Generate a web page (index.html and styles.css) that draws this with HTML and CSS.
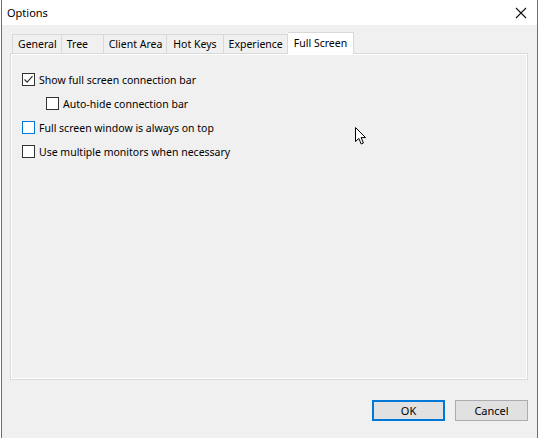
FILE: index.html
```html
<!DOCTYPE html>
<html lang="en">
<head>
    <meta charset="UTF-8">
    <title>Options</title>
    <link rel="stylesheet" href="styles.css">
</head>
<body>
    <div class="window">
        <div class="title-bar">
            <span class="title">Options</span>
            <svg class="close" width="12" height="12" viewBox="0 0 12 12">
                <path d="M1 1 L11 11 M11 1 L1 11" stroke="#111" stroke-width="1.1" fill="none"/>
            </svg>
        </div>
        <div class="client">
            <div class="tabs">
                <div class="tab">General</div>
                <div class="tab">Tree</div>
                <div class="tab">Client Area</div>
                <div class="tab wide">Hot Keys</div>
                <div class="tab">Experience</div>
                <div class="tab active">Full Screen</div>
            </div>
            <div class="pane">
                <label class="option">
                    <span class="box checked">
                        <svg width="11" height="11" viewBox="0 0 11 11"><path d="M1.5 5.5 L4.2 8.2 L9.5 2.2" stroke="#333" stroke-width="1.2" fill="none"/></svg>
                    </span>
                    Show full screen connection bar
                </label>
                <label class="option indent">
                    <span class="box"></span>
                    Auto-hide connection bar
                </label>
                <label class="option">
                    <span class="box focus"></span>
                    Full screen window is always on top
                </label>
                <label class="option">
                    <span class="box"></span>
                    Use multiple monitors when necessary
                </label>
            </div>
            <div class="buttons">
                <button class="btn default">OK</button>
                <button class="btn">Cancel</button>
            </div>
        </div>
        <!-- mouse pointer resting over the pane -->
        <svg class="pointer" width="14" height="20" viewBox="0 0 14 20">
            <path d="M0.5 0.5 L0.5 14.5 L3.8 11.4 L6.2 17 L8.4 16 L6.1 10.6 L10.6 10.6 Z" fill="#fff" stroke="#000" stroke-width="1"/>
        </svg>
    </div>
</body>
</html>
```

FILE: styles.css
```css
* {
    box-sizing: border-box;
}
body, html {
    margin: 0;
    height: 100%;
    background-color: #ffffff;
    font-family: "Noto Sans", "Open Sans", sans-serif;
    font-size: 10.5px;
    color: #000;
}
.window {
    position: relative;
    margin-left: 1px;
    width: 537px;
    height: 438px;
    border-left: 1px solid #6e6e6e;
    border-right: 1px solid #6e6e6e;
    display: flex;
    flex-direction: column;
    background-color: #f0f0f0;
}
.title-bar {
    height: 25px;
    background-color: #fff;
    display: flex;
    align-items: center;
    justify-content: space-between;
    padding: 0 10px 0 5px;
    flex-shrink: 0;
}
.title {
    font-size: 11px;
    margin-top: -1px;
}
.client {
    flex: 1;
    display: flex;
    flex-direction: column;
    padding: 7px 9px 0 8px;
}
.tabs {
    display: flex;
    align-items: flex-end;
    height: 21px;
    padding-left: 2px;
    position: relative;
    z-index: 1;
}
.tab {
    min-width: 42px;
    height: 19px;
    line-height: 18px;
    padding: 0 4px 0 5px;
    border: 1px solid #d9d9d9;
    border-bottom: none;
    border-right: none;
    background-color: #f0f0f0;
}
.tab.wide {
    padding: 0 6px;
}
.tab:nth-child(5) {
    border-right: 1px solid #d9d9d9;
}
.tab.active {
    height: 22px;
    line-height: 20px;
    background-color: #fff;
    border-right: 1px solid #d9d9d9;
    border-left: none;
    margin-bottom: -1px;
    padding: 0 6px;
}
.pane {
    height: 327px;
    border: 1px solid #d9d9d9;
    box-shadow: inset 0 0 0 1px #fff;
    padding: 19px 11px 0;
    display: flex;
    flex-direction: column;
    gap: 11px;
}
.option {
    display: flex;
    align-items: center;
    gap: 4px;
    height: 13px;
}
.option.indent {
    margin-left: 24px;
}
.box {
    width: 13px;
    height: 13px;
    border: 1px solid #333;
    background-color: #fff;
    display: flex;
    flex-shrink: 0;
}
.box.focus {
    border-color: #0078d7;
}
.buttons {
    display: flex;
    justify-content: flex-end;
    gap: 10px;
    margin-top: 20px;
}
.btn {
    width: 73px;
    height: 21px;
    font-family: inherit;
    font-size: 11px;
    background-color: #e1e1e1;
    border: 1px solid #adadad;
    padding: 0;
}
.btn.default {
    border: 2px solid #0078d7;
}
.pointer {
    position: absolute;
    left: 353px;
    top: 127px;
}
```
